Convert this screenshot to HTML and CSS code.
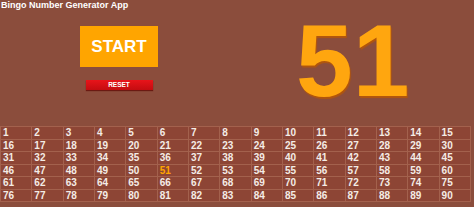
FILE: index.html
```html
<!DOCTYPE html>
<html lang="en">
  <head>
    <meta charset="UTF-8" />
    <meta name="viewport" content="width=device-width, initial-scale=1.0" />
    <title>Bingo Number Generator App</title>
    <link rel="stylesheet" href="styles.css">
  </head>
  <body>
    <h1 class="title">Bingo Number Generator App</h1>

    <div class="top">
      <div class="controls">
        <button class="start">START</button>
        <button class="reset">RESET</button>
      </div>
      <div class="current" id="current">51</div>
    </div>

    <table class="board" id="board"></table>

    <script>
      // build the 1..90 board, 15 per row
      let board = document.getElementById("board");
      let called = [51];
      for (let r = 0; r < 6; r++) {
        let row = board.insertRow();
        for (let c = 1; c <= 15; c++) {
          let n = r * 15 + c;
          let cell = row.insertCell();
          cell.textContent = n;
          if (called.indexOf(n) !== -1) {
            cell.className = "called";
          }
        }
      }
    </script>
  </body>
</html>
```

FILE: styles.css
```css
body {
  margin: 0;
  background-color: #8b4d3c;
  font-family: "Liberation Sans", Arial, sans-serif;
  color: #fff;
}

.title {
  margin: 0;
  padding-left: 1px;
  font-size: 9px;
  line-height: 10px;
  font-weight: bold;
}

/* start / reset + current number */
.top {
  display: flex;
  height: 116px;
}

.controls {
  display: flex;
  flex-direction: column;
  align-items: center;
  margin-left: 80px;
  margin-top: 16px;
}

.start {
  width: 78px;
  height: 41px;
  border: none;
  padding: 0;
  background-color: #ffa500;
  color: #fff;
  font-family: inherit;
  font-size: 17px;
  font-weight: bold;
  cursor: pointer;
}

.reset {
  width: 67px;
  height: 10px;
  margin-top: 13px;
  border: none;
  padding: 0;
  background: linear-gradient(#e8141a, #c40c10);
  box-shadow: 0 1px 1px #6b1a12;
  color: #fff;
  font-family: inherit;
  font-size: 6.5px;
  font-weight: bold;
  line-height: 10px;
  cursor: pointer;
}

.current {
  margin-left: 138px;
  font-size: 102px;
  line-height: 1;
  font-weight: bold;
  color: #ffa60f;
  text-shadow: 1px 2px 1px #b2560c;
}

/* board */
.board {
  width: 471px;
  border-collapse: collapse;
  background-color: #8d4535;
}

.board td {
  width: 31px;
  height: 11.5px;
  padding: 0 0 0 2px;
  border: 1px solid #a3614d;
  font-size: 10px;
  line-height: 11.5px;
  font-weight: bold;
  color: #f4ece6;
}

.board td.called {
  color: #ffa500;
}
```
